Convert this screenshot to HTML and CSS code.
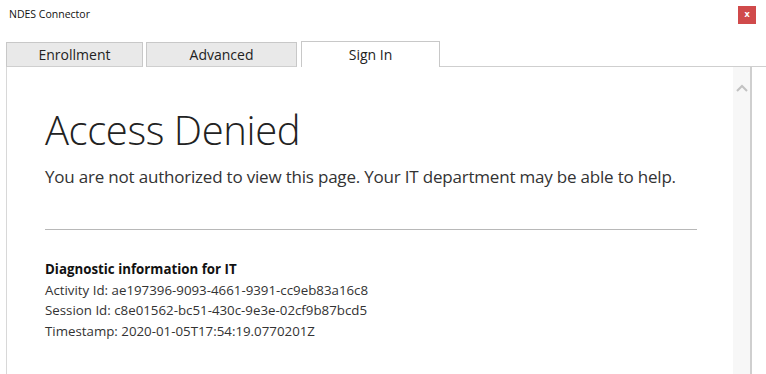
FILE: index.html
```html
<!DOCTYPE html>
<html>
<head>
<meta charset="utf-8">
<link rel="stylesheet" href="styles.css">
</head>
<body>
<div class="window">
  <div class="titlebar">
    <span class="title">NDES Connector</span>
    <span class="close">x</span>
  </div>
  <div class="tabs">
    <div class="tab">Enrollment</div>
    <div class="tab tab-adv">Advanced</div>
    <div class="tab tab-active">Sign In</div>
    <div class="tab-fill"></div>
  </div>
  <div class="panel">
    <div class="content">
      <h1 class="heading">Access Denied</h1>
      <p class="lead">You are not authorized to view this page. Your IT department may be able to help.</p>
      <hr class="rule">
      <div class="diag">
        <div class="diag-title">Diagnostic information for IT</div>
        <div>Activity Id: ae197396-9093-4661-9391-cc9eb83a16c8</div>
        <div>Session Id: c8e01562-bc51-430c-9e3e-02cf9b87bcd5</div>
        <div>Timestamp: 2020-01-05T17:54:19.0770201Z</div>
      </div>
    </div>
    <div class="scrollbar">
      <svg class="chev" width="12" height="8" viewBox="0 0 12 8"><path d="M1 7 L6 2 L11 7" fill="none" stroke="#c2c2c2" stroke-width="2"/></svg>
    </div>
  </div>
</div>
</body>
</html>
```
FILE: styles.css
```css
html, body {
  margin: 0;
  padding: 0;
  background: #fff;
  width: 766px;
  height: 374px;
  overflow: hidden;
}
.window {
  font-family: "Open Sans", "Noto Sans", sans-serif;
  color: #333;
  height: 374px;
  display: flex;
  flex-direction: column;
}
.titlebar {
  height: 30px;
  display: flex;
  align-items: center;
  justify-content: space-between;
  flex-shrink: 0;
}
.title {
  font-size: 10.5px;
  color: #111;
  padding-left: 9px;
  margin-top: -3px;
}
.close {
  width: 18px;
  height: 18px;
  background: #d04a4b;
  color: #fff;
  font-size: 9px;
  font-weight: 700;
  line-height: 16px;
  text-align: center;
  margin-right: 10px;
}
.tabs {
  display: flex;
  align-items: flex-end;
  height: 37px;
  padding-left: 6px;
  flex-shrink: 0;
}
.tab {
  box-sizing: border-box;
  width: 137px;
  height: 25px;
  background: #e9e9e9;
  border: 1px solid #c8c8c8;
  border-bottom: 1px solid #cfcfcf;
  font-size: 14px;
  color: #222;
  text-align: center;
  line-height: 23px;
  margin-right: 3px;
}
.tab-adv {
  width: 151px;
  margin-right: 4px;
}
.tab-active {
  width: 139px;
  height: 26px;
  background: #fff;
  border-color: #c8c8c8;
  border-bottom: none;
  margin-right: 0;
  line-height: 25px;
}
.tab-fill {
  flex: 1;
  border-bottom: 1px solid #cfcfcf;
  height: 0;
}
.panel {
  flex: 1;
  display: flex;
  margin-left: 6px;
  width: 746px;
  box-sizing: border-box;
  border-left: 1px solid #d8d8d8;
  border-right: 2px solid #cfcfcf;
}
.content {
  flex: 1;
  padding-left: 38px;
  padding-right: 36px;
}
.heading {
  font-weight: 300;
  font-size: 40px;
  margin: 33px 0 0 0;
  line-height: 60px;
  color: #222;
  letter-spacing: -0.4px;
}
.lead {
  font-size: 17px;
  margin: 5px 0 0 0;
  line-height: 24px;
  color: #333;
  letter-spacing: -0.2px;
}
.rule {
  border: none;
  border-top: 1px solid #b8b8b8;
  margin: 40px 0 0 0;
  height: 0;
}
.diag {
  margin-top: 29px;
  font-size: 13.3px;
  line-height: 20.5px;
  color: #333;
}
.diag-title {
  font-weight: 700;
  color: #111;
}
.scrollbar {
  width: 17px;
  background: #f7f7f7;
  display: flex;
  justify-content: center;
  padding-top: 17px;
  box-sizing: border-box;
}
.chev {
  display: block;
}
```
